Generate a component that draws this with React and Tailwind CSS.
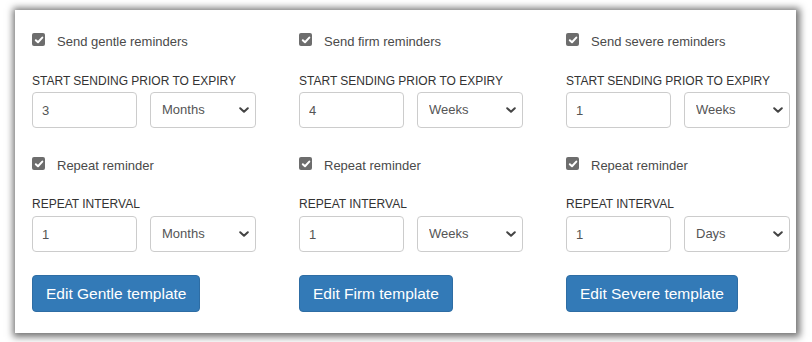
import { useState } from "react";

const columns = [
  { title: "Send gentle reminders", prior: "3", priorUnit: "Months", repeat: "1", repeatUnit: "Months", button: "Edit Gentle template" },
  { title: "Send firm reminders", prior: "4", priorUnit: "Weeks", repeat: "1", repeatUnit: "Weeks", button: "Edit Firm template" },
  { title: "Send severe reminders", prior: "1", priorUnit: "Weeks", repeat: "1", repeatUnit: "Days", button: "Edit Severe template" },
];

function Check({ label }) {
  return (
    <label className="flex h-5 items-start">
      <span className="mt-[1px] flex h-[13px] w-[13px] items-center justify-center rounded-[2px] bg-[#6d6d6d]">
        <svg width="10" height="10" viewBox="0 0 10 10" fill="none">
          <path d="M1.8 5.2 L4 7.3 L8.3 2.6" stroke="#fff" strokeWidth="2" strokeLinecap="round" strokeLinejoin="round" />
        </svg>
      </span>
      <span className="ml-[12px] text-[13px] leading-5 text-[#4a4a4a]">{label}</span>
    </label>
  );
}

function Unit({ value }) {
  return (
    <div className="relative h-[36px] w-[106px]">
      <select
        defaultValue={value}
        className="h-full w-full appearance-none rounded-[4px] border border-[#ccc] bg-white pl-[11px] text-[13px] text-[#555] outline-none"
      >
        <option>Days</option>
        <option>Weeks</option>
        <option>Months</option>
      </select>
      <svg className="pointer-events-none absolute right-[7px] top-[15px]" width="10" height="6" viewBox="0 0 10 6" fill="none">
        <path d="M1.2 1.2 L5 4.8 L8.8 1.2" stroke="#444" strokeWidth="2" strokeLinecap="round" strokeLinejoin="round" />
      </svg>
    </div>
  );
}

function Row({ num, unit }) {
  const [val, setVal] = useState(num);
  return (
    <div className="flex gap-[13px]">
      <input
        value={val}
        onChange={(e) => setVal(e.target.value)}
        className="h-[36px] w-[105px] rounded-[4px] border border-[#ccc] bg-white pl-[9px] text-[13px] text-[#555] outline-none"
      />
      <Unit value={unit} />
    </div>
  );
}

export default function App() {
  return (
    <div className="h-[342px] w-[812px] bg-white pt-[10px] pl-[15px]" style={{ fontFamily: '"Liberation Sans", Arial, sans-serif' }}>
      <div className="flex h-[323px] w-[781px] gap-[43px] bg-white pt-[22px] pl-[17px] shadow-[1px_1px_7px_3px_rgba(0,0,0,0.55)]">
        {columns.map((c) => (
          <div key={c.title} className="flex w-[224px] flex-col">
            <Check label={c.title} />
            <div className="mt-[21px] text-[12px] leading-4 text-[#333]">START SENDING PRIOR TO EXPIRY</div>
            <div className="mt-[3px]">
              <Row num={c.prior} unit={c.priorUnit} />
            </div>
            <div className="mt-[28px]">
              <Check label="Repeat reminder" />
            </div>
            <div className="mt-[20px] text-[12px] leading-4 text-[#333]">REPEAT INTERVAL</div>
            <div className="mt-[4px]">
              <Row num={c.repeat} unit={c.repeatUnit} />
            </div>
            <div className="mt-[23px]">
              <button className="h-[37px] rounded-[4px] border border-[#2e6da4] bg-[#337ab7] px-[13px] text-[15.5px] text-white">
                {c.button}
              </button>
            </div>
          </div>
        ))}
      </div>
    </div>
  );
}
